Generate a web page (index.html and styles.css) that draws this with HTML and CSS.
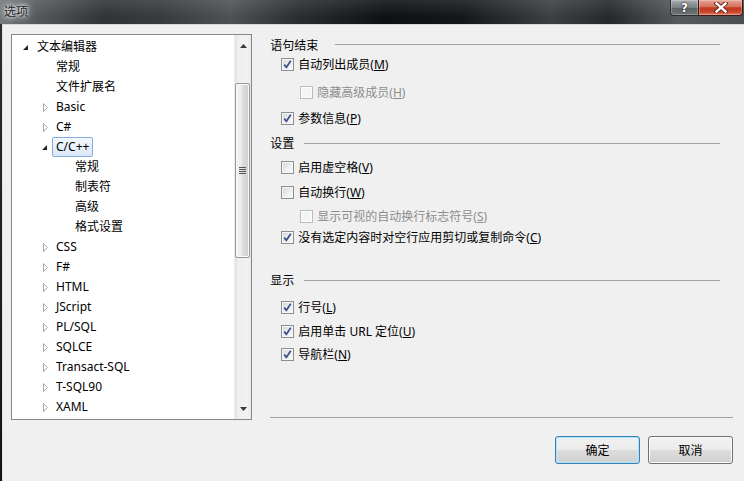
FILE: index.html
```html
<!DOCTYPE html>
<html lang="zh-CN">
<head>
<meta charset="utf-8">
<title>选项</title>
<link rel="stylesheet" href="styles.css">
</head>
<body>
<div class="window">
  <div class="titlebar">
    <span class="title">选项</span>
    <div class="caption-btns">
      <span class="cap-btn help">?</span>
      <span class="cap-btn close">
        <svg width="14" height="11" viewBox="0 0 14 11">
          <path d="M2.5 1.5 L11.5 9.5 M11.5 1.5 L2.5 9.5" stroke="#5a1d12" stroke-width="4.2" stroke-linecap="square"/>
          <path d="M2.5 1.5 L11.5 9.5 M11.5 1.5 L2.5 9.5" stroke="#ffffff" stroke-width="2.4" stroke-linecap="square"/>
        </svg>
      </span>
    </div>
  </div>

  <div class="client">
    <div class="main">
      <div class="tree">
        <ul class="tree-list">
          <li class="node l1"><span class="twisty"><svg class="tw-open" width="5" height="5" viewBox="0 0 5 5"><path d="M5 0 L5 5 L0 5 Z" fill="#262626"/></svg></span><span class="label">文本编辑器</span></li>
          <li class="node l2"><span class="twisty"></span><span class="label">常规</span></li>
          <li class="node l2"><span class="twisty"></span><span class="label">文件扩展名</span></li>
          <li class="node l2"><span class="twisty"><svg class="tw-closed" width="5" height="9" viewBox="0 0 5 9"><path d="M0.5 0.5 L4.5 4.5 L0.5 8.5 Z" fill="#fff" stroke="#a7a7a7"/></svg></span><span class="label">Basic</span></li>
          <li class="node l2"><span class="twisty"><svg class="tw-closed" width="5" height="9" viewBox="0 0 5 9"><path d="M0.5 0.5 L4.5 4.5 L0.5 8.5 Z" fill="#fff" stroke="#a7a7a7"/></svg></span><span class="label">C#</span></li>
          <li class="node l2"><span class="twisty"><svg class="tw-open" width="5" height="5" viewBox="0 0 5 5"><path d="M5 0 L5 5 L0 5 Z" fill="#262626"/></svg></span><span class="label selected">C/C++</span></li>
          <li class="node l3"><span class="twisty"></span><span class="label">常规</span></li>
          <li class="node l3"><span class="twisty"></span><span class="label">制表符</span></li>
          <li class="node l3"><span class="twisty"></span><span class="label">高级</span></li>
          <li class="node l3"><span class="twisty"></span><span class="label">格式设置</span></li>
          <li class="node l2"><span class="twisty"><svg class="tw-closed" width="5" height="9" viewBox="0 0 5 9"><path d="M0.5 0.5 L4.5 4.5 L0.5 8.5 Z" fill="#fff" stroke="#a7a7a7"/></svg></span><span class="label">CSS</span></li>
          <li class="node l2"><span class="twisty"><svg class="tw-closed" width="5" height="9" viewBox="0 0 5 9"><path d="M0.5 0.5 L4.5 4.5 L0.5 8.5 Z" fill="#fff" stroke="#a7a7a7"/></svg></span><span class="label">F#</span></li>
          <li class="node l2"><span class="twisty"><svg class="tw-closed" width="5" height="9" viewBox="0 0 5 9"><path d="M0.5 0.5 L4.5 4.5 L0.5 8.5 Z" fill="#fff" stroke="#a7a7a7"/></svg></span><span class="label">HTML</span></li>
          <li class="node l2"><span class="twisty"><svg class="tw-closed" width="5" height="9" viewBox="0 0 5 9"><path d="M0.5 0.5 L4.5 4.5 L0.5 8.5 Z" fill="#fff" stroke="#a7a7a7"/></svg></span><span class="label">JScript</span></li>
          <li class="node l2"><span class="twisty"><svg class="tw-closed" width="5" height="9" viewBox="0 0 5 9"><path d="M0.5 0.5 L4.5 4.5 L0.5 8.5 Z" fill="#fff" stroke="#a7a7a7"/></svg></span><span class="label">PL/SQL</span></li>
          <li class="node l2"><span class="twisty"><svg class="tw-closed" width="5" height="9" viewBox="0 0 5 9"><path d="M0.5 0.5 L4.5 4.5 L0.5 8.5 Z" fill="#fff" stroke="#a7a7a7"/></svg></span><span class="label">SQLCE</span></li>
          <li class="node l2"><span class="twisty"><svg class="tw-closed" width="5" height="9" viewBox="0 0 5 9"><path d="M0.5 0.5 L4.5 4.5 L0.5 8.5 Z" fill="#fff" stroke="#a7a7a7"/></svg></span><span class="label">Transact-SQL</span></li>
          <li class="node l2"><span class="twisty"><svg class="tw-closed" width="5" height="9" viewBox="0 0 5 9"><path d="M0.5 0.5 L4.5 4.5 L0.5 8.5 Z" fill="#fff" stroke="#a7a7a7"/></svg></span><span class="label">T-SQL90</span></li>
          <li class="node l2"><span class="twisty"><svg class="tw-closed" width="5" height="9" viewBox="0 0 5 9"><path d="M0.5 0.5 L4.5 4.5 L0.5 8.5 Z" fill="#fff" stroke="#a7a7a7"/></svg></span><span class="label">XAML</span></li>
        </ul>
        <div class="vscroll">
          <div class="sb-btn"><svg width="7" height="4" viewBox="0 0 7 4"><path d="M3.5 0 L7 4 L0 4 Z" fill="#3a3a3a"/></svg></div>
          <div class="sb-track">
            <div class="sb-thumb"><span class="grip"></span></div>
          </div>
          <div class="sb-btn"><svg width="7" height="4" viewBox="0 0 7 4"><path d="M0 0 L7 0 L3.5 4 Z" fill="#3a3a3a"/></svg></div>
        </div>
      </div>

      <div class="options">
        <div class="group-head first"><span>语句结束</span><i class="rule wide"></i></div>
        <label class="check"><span class="box"><svg width="11" height="11" viewBox="0 0 11 11"><path d="M2.2 5.6 L4.4 8.3 L8.8 1.8" fill="none" stroke="#3d4f86" stroke-width="1.7"/></svg></span><span class="text">自动列出成员(<u>M</u>)</span></label>
        <label class="check nested disabled mt8"><span class="box"></span><span class="text">隐藏高级成员(<u>H</u>)</span></label>
        <label class="check mt6"><span class="box"><svg width="11" height="11" viewBox="0 0 11 11"><path d="M2.2 5.6 L4.4 8.3 L8.8 1.8" fill="none" stroke="#3d4f86" stroke-width="1.7"/></svg></span><span class="text">参数信息(<u>P</u>)</span></label>

        <div class="group-head mt5"><span>设置</span><i class="rule"></i></div>
        <label class="check mt4"><span class="box"></span><span class="text">启用虚空格(<u>V</u>)</span></label>
        <label class="check mt5"><span class="box"></span><span class="text">自动换行(<u>W</u>)</span></label>
        <label class="check nested disabled mt4"><span class="box"></span><span class="text">显示可视的自动换行标志符号(<u>S</u>)</span></label>
        <label class="check mt1"><span class="box"><svg width="11" height="11" viewBox="0 0 11 11"><path d="M2.2 5.6 L4.4 8.3 L8.8 1.8" fill="none" stroke="#3d4f86" stroke-width="1.7"/></svg></span><span class="text">没有选定内容时对空行应用剪切或复制命令(<u>C</u>)</span></label>

        <div class="group-head mt23"><span>显示</span><i class="rule"></i></div>
        <label class="check mt7"><span class="box"><svg width="11" height="11" viewBox="0 0 11 11"><path d="M2.2 5.6 L4.4 8.3 L8.8 1.8" fill="none" stroke="#3d4f86" stroke-width="1.7"/></svg></span><span class="text">行号(<u>L</u>)</span></label>
        <label class="check mt4"><span class="box"><svg width="11" height="11" viewBox="0 0 11 11"><path d="M2.2 5.6 L4.4 8.3 L8.8 1.8" fill="none" stroke="#3d4f86" stroke-width="1.7"/></svg></span><span class="text">启用单击 URL 定位(<u>U</u>)</span></label>
        <label class="check mt3"><span class="box"><svg width="11" height="11" viewBox="0 0 11 11"><path d="M2.2 5.6 L4.4 8.3 L8.8 1.8" fill="none" stroke="#3d4f86" stroke-width="1.7"/></svg></span><span class="text">导航栏(<u>N</u>)</span></label>

        <div class="separator"></div>
      </div>
    </div>

    <div class="buttons">
      <button class="btn default">确定</button>
      <button class="btn">取消</button>
    </div>
  </div>
</div>
</body>
</html>
```

FILE: styles.css
```css
* { box-sizing: border-box; }
html, body { margin: 0; padding: 0; }
body {
  width: 744px;
  height: 481px;
  overflow: hidden;
  background: linear-gradient(to bottom, #2a302d, #111513);
  font-family: "Noto Sans", "Noto Sans CJK SC", sans-serif;
  font-size: 12px;
  color: #000;
}
.window { display: flex; flex-direction: column; height: 481px; }

/* title bar */
.titlebar {
  height: 24px;
  flex: none;
  display: flex;
  align-items: flex-start;
  background:
    linear-gradient(to bottom, rgba(255,255,255,0.10), rgba(255,255,255,0) 70%),
    linear-gradient(to right, #75797b 0%, #55595c 5%, #303437 14%, #383c3f 22%, #4e5254 31%, #2a2e31 40%, #0e1114 52%, #15181b 62%, #3c4043 74%, #25292c 82%, #56595c 91%, #4a4e51 100%);
}
.title {
  padding: 4px 0 0 4px;
  line-height: 16px;
  color: #1e1e1e;
  text-shadow: 0 0 3px #fff, 0 0 6px rgba(255,255,255,0.85), 0 0 8px rgba(255,255,255,0.6);
}
.caption-btns { margin-left: auto; margin-right: 1px; display: flex; height: 16px; }
.cap-btn { display: flex; align-items: center; justify-content: center; height: 16px; }
.help {
  width: 28px;
  border: 1px solid #2a2e31;
  border-top: none;
  border-right: none;
  border-radius: 0 0 0 4px;
  background: linear-gradient(to bottom, #a8adb0 0%, #7b8084 50%, #5c6164 51%, #6e7376 100%);
  box-shadow: inset 0 0 0 1px rgba(255,255,255,0.25);
  color: #fff;
  font-family: "DejaVu Sans", sans-serif;
  font-weight: bold;
  font-size: 12px;
  line-height: 14px;
  text-shadow: 0 0 2px #222, 0 0 1px #000;
}
.close {
  width: 45px;
  border: 1px solid #3a1a14;
  border-top: none;
  border-radius: 0 0 4px 0;
  background: linear-gradient(to bottom, #e7a595 0%, #d4705c 45%, #c0391f 52%, #c9442a 80%, #e0806a 100%);
  box-shadow: inset 0 0 0 1px rgba(255,255,255,0.25);
}

/* client */
.client {
  flex: 1;
  margin-left: 2px;
  background: #f0f0f0;
  border-top: 1px solid #d9d9d9;
  border-left: 1px solid #e3e3e3;
  padding: 9px 11px 0 8px;
  display: flex;
  flex-direction: column;
}
.main { display: flex; height: 386px; gap: 18px; }

/* tree */
.tree {
  width: 242px;
  height: 386px;
  border: 1px solid #828790;
  background: #fff;
  display: flex;
}
.tree-list { flex: 1; list-style: none; margin: 0; padding: 2px 0 0 0; }
.node { height: 20px; display: flex; align-items: center; white-space: nowrap; }
.l1 { padding-left: 9px; }
.l2 { padding-left: 28px; }
.l3 { padding-left: 47px; }
.twisty { width: 12px; height: 20px; display: flex; align-items: center; flex: none; }
.tw-open { margin-left: 2px; margin-top: 1px; }
.tw-closed { margin-left: 3px; }
.label {
  border: 1px solid transparent;
  border-radius: 2px;
  padding: 0 3px;
  line-height: 18px;
}
.label.selected {
  border-color: #84acdd;
  background: linear-gradient(to bottom, #f5f9fe, #dbe8f9);
}

/* scrollbar */
.vscroll {
  width: 17px;
  flex: none;
  display: flex;
  flex-direction: column;
  background: linear-gradient(to right, #e3e3e3 0%, #efefef 20%, #f2f2f2 80%, #e9e9e9 100%);
  border-left: 1px solid #ececec;
}
.sb-btn { height: 20px; display: flex; align-items: center; justify-content: center; flex: none; }
.sb-btn:first-child { padding-top: 1px; }
.sb-track { flex: 1; padding-top: 28px; }
.sb-thumb {
  height: 175px;
  margin: 0 1px 0 0;
  border: 1px solid #979797;
  border-radius: 2px;
  background: linear-gradient(to right, #f4f4f4 0%, #ececec 40%, #dcdcdc 55%, #cfcfcf 100%);
  box-shadow: inset 0 0 0 1px #fafafa;
  display: flex;
  align-items: center;
  justify-content: center;
}
.grip {
  width: 7px;
  height: 8px;
  background: repeating-linear-gradient(to bottom, #555 0, #555 1px, transparent 1px, transparent 2px);
}

/* options */
.options { width: 464px; display: flex; flex-direction: column; }
.group-head {
  display: flex;
  align-items: center;
  height: 20px;
  padding-right: 13px;
  white-space: nowrap;
}
.group-head.first { margin-top: 1px; height: 19px; }
.rule { flex: 1; height: 0; border-top: 1px solid #a3a3a3; margin-left: 10px; }
.rule.wide { margin-left: 17px; }

.check {
  display: flex;
  align-items: center;
  gap: 4px;
  height: 20px;
  padding-left: 11px;
  white-space: nowrap;
}
.check.nested { padding-left: 30px; }
.check.disabled { color: #8d8d8d; }
.box {
  width: 13px;
  height: 13px;
  flex: none;
  border: 1px solid #8e8f8f;
  background: linear-gradient(135deg, #d3d6da 0%, #eceef0 55%, #fbfbfb 100%);
  box-shadow: inset 0 0 0 1px #f6f6f6;
  display: flex;
  align-items: center;
  justify-content: center;
}
.disabled .box {
  border-color: #bcbcbc;
  background: #f4f4f4;
  box-shadow: inset 0 0 0 1px #fdfdfd;
}
u { text-decoration: underline; text-underline-offset: 1px; }

.mt1 { margin-top: 1px; }
.mt3 { margin-top: 3px; }
.mt4 { margin-top: 4px; }
.mt5 { margin-top: 5px; }
.mt6 { margin-top: 6px; }
.mt7 { margin-top: 7px; }
.mt8 { margin-top: 8px; }
.mt23 { margin-top: 23px; }

.separator {
  margin-top: auto;
  margin-bottom: 2px;
  height: 0;
  border-top: 1px solid #a3a3a3;
}

/* buttons */
.buttons { display: flex; justify-content: flex-end; gap: 8px; margin-top: 16px; }
.btn {
  width: 85px;
  height: 28px;
  border: 1px solid #707070;
  border-radius: 3px;
  background: linear-gradient(to bottom, #f2f2f2 0%, #ebebeb 50%, #dddddd 51%, #cfcfcf 100%);
  box-shadow: inset 0 0 0 1px #fbfbfb;
  font-family: "Noto Sans", "Noto Sans CJK SC", sans-serif;
  font-size: 12px;
  color: #000;
  padding: 0;
}
.btn.default {
  border-color: #3c7fb1;
  box-shadow: inset 0 0 0 1px #a9e4fb, inset 0 0 2px 1px #d4f1fd;
}
```
